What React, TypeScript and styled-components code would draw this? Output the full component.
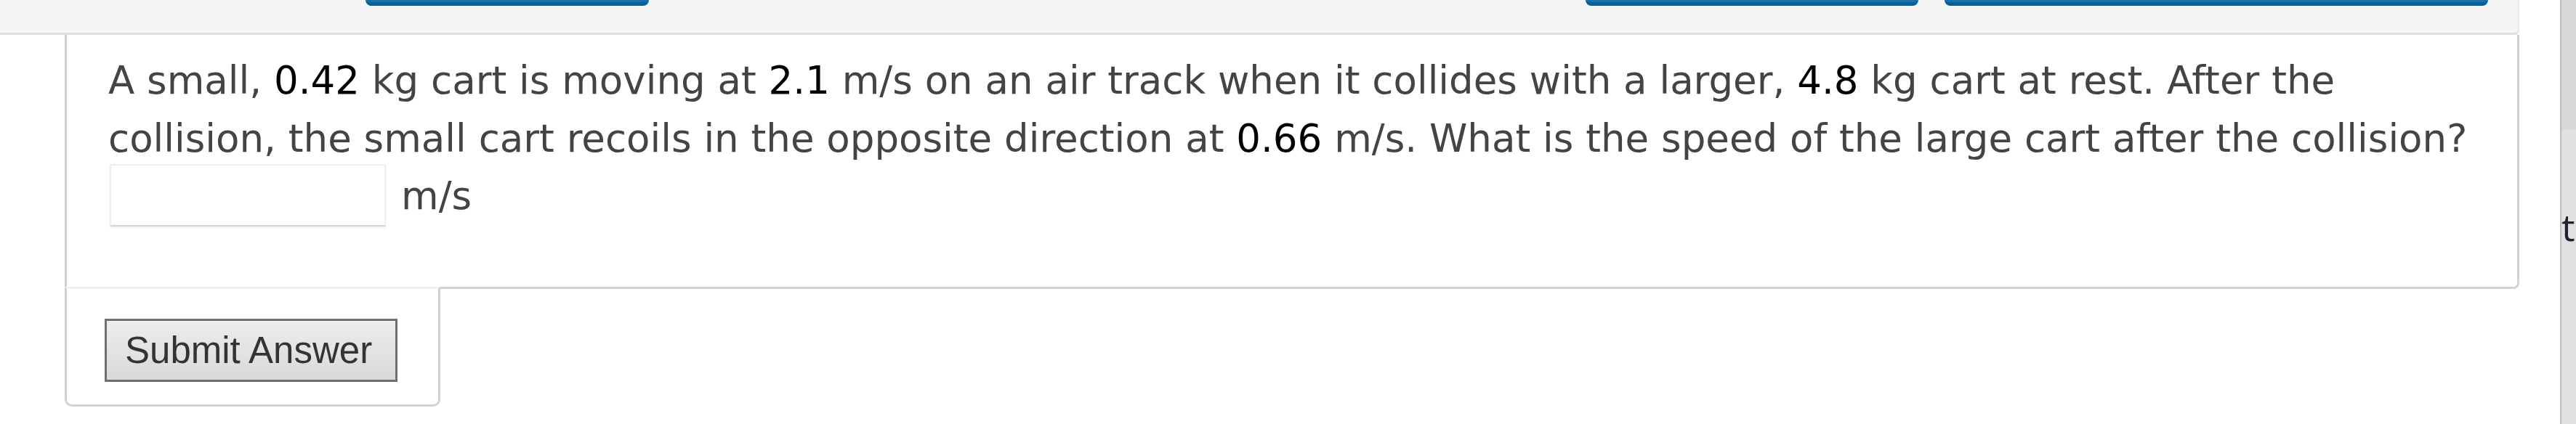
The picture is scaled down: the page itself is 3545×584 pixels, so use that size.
import styled, { createGlobalStyle } from "styled-components";

const GlobalStyle = createGlobalStyle`
  html, body {
    margin: 0;
    padding: 0;
    background: #ffffff;
  }
  * {
    box-sizing: border-box;
  }
`;

const Page = styled.div`
  display: flex;
  width: 3545px;
  height: 584px;
  overflow: hidden;
  background: #ffffff;
`;

const Main = styled.div`
  width: 3467px;
  display: flex;
  flex-direction: column;
`;

const Toolbar = styled.div`
  display: flex;
  align-items: flex-start;
  height: 48px;
  padding: 0 41px 0 503px;
  background: #f5f5f5;
  border-bottom: 3px solid #dedede;
  border-right: 2px solid #e8e8e8;
  border-bottom-right-radius: 6px;
`;

const Spacer = styled.div`
  flex: 1;
`;

const ButtonGroup = styled.div`
  display: flex;
  gap: 36px;
`;

const NavButton = styled.div<{ $w: number }>`
  width: ${(p) => p.$w}px;
  height: 8px;
  background: #1a6fab;
  border-bottom: 5px solid #0b5f98;
  border-radius: 0 0 9px 9px;
`;

const Card = styled.div`
  margin-left: 89px;
  padding: 23px 57px 83px 57px;
  background: #ffffff;
  border-left: 3px solid #d2d2d2;
  border-right: 3px solid #d2d2d2;
  border-bottom: 3px solid #d2d2d2;
  border-bottom-right-radius: 8px;
`;

const Question = styled.p`
  margin: 0;
  font-family: "DejaVu Sans", Verdana, sans-serif;
  font-size: 53px;
  line-height: 79.5px;
  color: #444444;
`;

const Num = styled.span`
  color: #000000;
`;

const AnswerRow = styled.div`
  display: flex;
  align-items: center;
  gap: 21px;
  margin-top: -4px;
  margin-left: 2px;
`;

const AnswerInput = styled.input`
  width: 380px;
  height: 86px;
  border: 2px solid #eeeeee;
  border-bottom-color: #d4d4d4;
  box-shadow: 0 2px 2px rgba(0, 0, 0, 0.06);
  background: #ffffff;
  outline: none;
`;

const Unit = styled.span`
  font-family: "DejaVu Sans", Verdana, sans-serif;
  font-size: 53px;
  color: #444444;
`;

const SubmitTab = styled.div`
  align-self: flex-start;
  margin-left: 89px;
  margin-top: -3px;
  width: 517px;
  padding: 41px 53px 31px 52px;
  background: #ffffff;
  border: 3px solid #d2d2d2;
  border-top: 3px solid #f0f0f0;
  border-radius: 0 0 10px 10px;
`;

const SubmitButton = styled.button`
  display: block;
  width: 403px;
  height: 87px;
  padding: 0 0 0 25px;
  text-align: left;
  font-family: "Liberation Sans", Arial, sans-serif;
  font-size: 51px;
  color: #333333;
  background: linear-gradient(#ededed, #d9d9d9);
  border: 3px solid #707070;
  border-radius: 0;
`;

const SidePanel = styled.div`
  margin-left: 56px;
  flex: 1;
  overflow: hidden;
  background: linear-gradient(#d7d7d7 0, #d7d7d7 178px, #e0e0e0 178px);
  border-left: 2px solid #bdbdbd;
  padding-top: 282px;
`;

const SideText = styled.span`
  display: block;
  font-family: "Open Sans", sans-serif;
  font-size: 52px;
  line-height: 60px;
  color: #1f1f38;
  white-space: nowrap;
`;

export default function App() {
  return (
    <>
      <GlobalStyle />
      <Page>
        <Main>
          <Toolbar>
            <NavButton $w={390} />
            <Spacer />
            <ButtonGroup>
              <NavButton $w={458} />
              <NavButton $w={748} />
            </ButtonGroup>
          </Toolbar>
          <Card>
            <Question>
              A small, <Num>0.42</Num> kg cart is moving at <Num>2.1</Num> m/s
              on an air track when it collides with a larger, <Num>4.8</Num> kg
              cart at rest. After the collision, the small cart recoils in the
              opposite direction at <Num>0.66</Num> m/s. What is the speed of
              the large cart after the collision?
            </Question>
            <AnswerRow>
              <AnswerInput type="text" />
              <Unit>m/s</Unit>
            </AnswerRow>
          </Card>
          <SubmitTab>
            <SubmitButton>Submit Answer</SubmitButton>
          </SubmitTab>
        </Main>
        <SidePanel>
          <SideText>t</SideText>
        </SidePanel>
      </Page>
    </>
  );
}
